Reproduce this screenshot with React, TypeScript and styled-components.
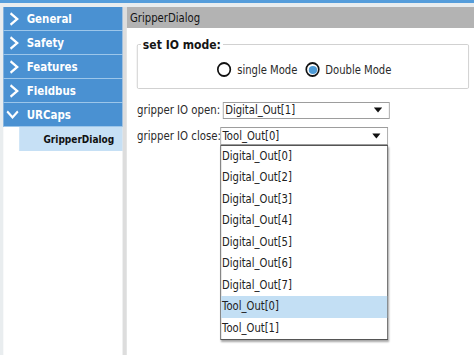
import React from "react";
import styled, { createGlobalStyle } from "styled-components";

const GlobalStyle = createGlobalStyle`
  html, body {
    margin: 0;
    padding: 0;
    width: 474px;
    height: 355px;
    overflow: hidden;
    background: #e9edef;
  }
`;

/* The screen is 1280x800 squeezed into 474x355: draw at 568px wide and squeeze horizontally. */
const Screen = styled.div`
  width: 568px;
  height: 355px;
  transform: scaleX(0.8345);
  transform-origin: 0 0;
  display: flex;
  flex-direction: column;
  background: #e9edef;
  font-family: "DejaVu Sans", "Liberation Sans", sans-serif;
  color: #1c1c1c;
`;

const TopStrip = styled.div`
  height: 3px;
  background: #559ddb;
  flex: none;
`;

const Main = styled.div`
  flex: 1;
  display: flex;
  margin-top: 4px;
  min-height: 0;
`;

const Sidebar = styled.nav`
  margin-left: 3.6px;
  width: 143.8px;
  background: #ffffff;
  display: flex;
  flex-direction: column;
  flex: none;
`;

const NavItem = styled.div`
  height: 23px;
  border-bottom: 1px solid #9cc6ea;
  background: #4a91d2;
  color: #ffffff;
  font-weight: bold;
  font-size: 12.3px;
  display: flex;
  align-items: center;
`;

const IconSlot = styled.span`
  width: 16px;
  margin-left: 3px;
  margin-right: 9.4px;
  display: flex;
  align-items: center;
  justify-content: center;
`;

const SubItem = styled.div<{ $active?: boolean }>`
  margin-left: 19.5px;
  height: 24px;
  background: ${(p) => (p.$active ? "#c6e0f5" : "transparent")};
  color: #111;
  font-weight: bold;
  font-size: 10.8px;
  display: flex;
  align-items: center;
  padding-left: 29px;
  white-space: nowrap;
  overflow: hidden;
`;

const Divider = styled.div`
  width: 4.8px;
  background: #dddddd;
  flex: none;
`;

const Content = styled.section`
  flex: 1;
  background: #ffffff;
  display: flex;
  flex-direction: column;
`;

const Header = styled.div`
  height: 21px;
  background: #b3b3b3;
  display: flex;
  align-items: center;
  padding-left: 3.6px;
  font-size: 12.1px;
  color: #151515;
  flex: none;
`;

const Body = styled.div`
  padding: 0 6px 0 12px;
  display: flex;
  flex-direction: column;
`;

const Group = styled.fieldset`
  margin: 8.5px 0 0 0;
  padding: 0;
  border: 1px solid #cdcdcd;
  border-radius: 2px;
  min-width: 0;
`;

const Legend = styled.legend`
  margin-left: 4px;
  padding: 0 2px;
  font-weight: bold;
  font-size: 13px;
  line-height: 15px;
  color: #151515;
`;

const RadioRow = styled.div`
  height: 36px;
  display: flex;
  align-items: center;
  justify-content: center;
  padding-left: 3px;
`;

const RadioOption = styled.label`
  display: flex;
  align-items: center;
  font-size: 12px;
  color: #2a2a2a;
  & + & {
    margin-left: 9.6px;
  }
`;

const RadioCircle = styled.span<{ $checked?: boolean }>`
  width: 17px;
  height: 15px;
  box-sizing: border-box;
  border-radius: 50%;
  border: 2px solid #111111;
  padding: 1.5px;
  background: ${(p) => (p.$checked ? "#4e9bd6" : "#ffffff")};
  background-clip: content-box;
  margin-right: 7px;
  flex: none;
`;

const FieldRow = styled.div<{ $top: number; $height: number }>`
  margin-top: ${(p) => p.$top}px;
  height: ${(p) => p.$height}px;
  display: flex;
  align-items: center;
`;

const FieldLabel = styled.span<{ $width: number }>`
  width: ${(p) => p.$width}px;
  font-size: 12.2px;
  color: #2a2a2a;
  white-space: nowrap;
  overflow: hidden;
  flex: none;
`;

const Combo = styled.div<{ $width: number }>`
  position: relative;
  width: ${(p) => p.$width}px;
  height: 100%;
  box-sizing: border-box;
  border: 1px solid #9d9d9d;
  background: #ffffff;
  display: flex;
  align-items: center;
  justify-content: space-between;
  padding: 0 8px 0 2px;
  font-size: 12px;
  color: #222;
`;

const DropList = styled.ul`
  position: absolute;
  top: 100%;
  left: -1px;
  right: -1px;
  margin: 1px 0 0 0;
  padding: 0;
  list-style: none;
  background: #ffffff;
  border: 1px solid #555555;
  box-shadow: 1px 2px 2px rgba(0, 0, 0, 0.35);
  z-index: 2;
`;

const DropItem = styled.li<{ $selected?: boolean }>`
  height: 21.5px;
  line-height: 21.5px;
  padding-left: 1.5px;
  font-size: 12px;
  color: #222;
  background: ${(p) => (p.$selected ? "#c3dff4" : "transparent")};
  white-space: nowrap;
`;

const Chevron = ({ open }: { open?: boolean }) =>
  open ? (
    <svg width="16" height="9" viewBox="0 0 16 9">
      <path d="M1.6 1.4 L8 7.4 L14.4 1.4" fill="none" stroke="#fff" strokeWidth="2.4" />
    </svg>
  ) : (
    <svg width="16" height="14" viewBox="0 0 16 14">
      <path d="M5.6 1.2 L13.6 7 L5.6 12.8" fill="none" stroke="#fff" strokeWidth="2.5" />
    </svg>
  );

const Arrow = () => (
  <svg width="10" height="6" viewBox="0 0 10 6">
    <polygon points="0,0.5 10,0.5 5,5.5" fill="#111" />
  </svg>
);

const navItems = ["General", "Safety", "Features", "Fieldbus"];
const options = [
  "Digital_Out[0]",
  "Digital_Out[2]",
  "Digital_Out[3]",
  "Digital_Out[4]",
  "Digital_Out[5]",
  "Digital_Out[6]",
  "Digital_Out[7]",
  "Tool_Out[0]",
  "Tool_Out[1]",
];

export default function App() {
  return (
    <>
      <GlobalStyle />
      <Screen>
        <TopStrip />
        <Main>
          <Sidebar>
            {navItems.map((n) => (
              <NavItem key={n}>
                <IconSlot>
                  <Chevron />
                </IconSlot>
                {n}
              </NavItem>
            ))}
            <NavItem>
              <IconSlot>
                <Chevron open />
              </IconSlot>
              URCaps
            </NavItem>
            <SubItem $active>GripperDialog</SubItem>
          </Sidebar>
          <Divider />
          <Content>
            <Header>GripperDialog</Header>
            <Body>
              <Group>
                <Legend>set IO mode:</Legend>
                <RadioRow>
                  <RadioOption>
                    <RadioCircle />
                    single Mode
                  </RadioOption>
                  <RadioOption>
                    <RadioCircle $checked />
                    Double Mode
                  </RadioOption>
                </RadioRow>
              </Group>
              <FieldRow $top={13} $height={17}>
                <FieldLabel $width={102.7}>gripper IO open:</FieldLabel>
                <Combo $width={200.5}>
                  <span>Digital_Out[1]</span>
                  <Arrow />
                </Combo>
              </FieldRow>
              <FieldRow $top={8} $height={18}>
                <FieldLabel $width={99.4}>gripper IO close:</FieldLabel>
                <Combo $width={201}>
                  <span>Tool_Out[0]</span>
                  <Arrow />
                  <DropList>
                    {options.map((o) => (
                      <DropItem key={o} $selected={o === "Tool_Out[0]"}>
                        {o}
                      </DropItem>
                    ))}
                  </DropList>
                </Combo>
              </FieldRow>
            </Body>
          </Content>
        </Main>
      </Screen>
    </>
  );
}
